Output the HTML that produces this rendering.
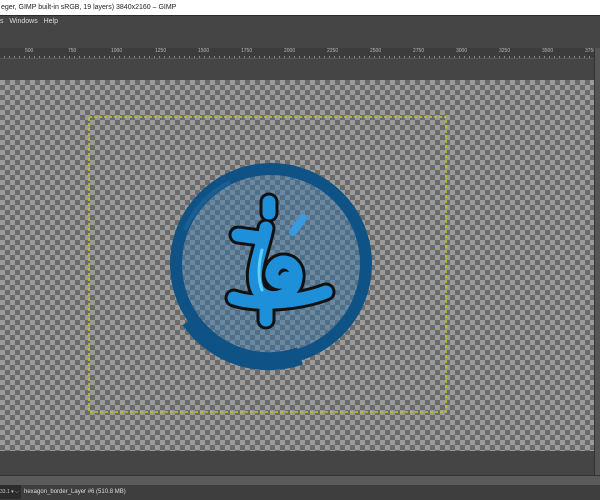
<!DOCTYPE html>
<html><head><style>
body{margin:0;width:600px;height:500px;overflow:hidden;background:#454545;font-family:"Liberation Sans",sans-serif;position:relative}
.a{position:absolute}
.chk{background-color:#9a9a9a;background-image:linear-gradient(45deg,#6a6a6a 25%,transparent 25%,transparent 75%,#6a6a6a 75%),linear-gradient(45deg,#6a6a6a 25%,transparent 25%,transparent 75%,#6a6a6a 75%);background-size:10px 10px;background-position:0 0,5px 5px}
</style></head><body>
<div class="a" style="left:0;top:0;width:600px;height:15px;background:#fff;font-size:7px;color:#222;line-height:15px;padding-left:1px">eger, GIMP built-in sRGB, 19 layers) 3840x2160 – GIMP</div>
<div class="a" style="left:0;top:15px;width:600px;height:1px;background:#2a2a2a"></div>
<div class="a" style="left:0;top:16px;font-size:7px;color:#ddd;line-height:12px">s &nbsp; Windows &nbsp; Help</div>
<div class="a" style="left:0;top:48px;width:594px;height:10px;background:#3c3c3c;font-size:5px;color:#bbb;line-height:6px;border-bottom:1px solid #555;
background-image:repeating-linear-gradient(90deg,transparent 0 4px,#888 4px 5px);background-size:100% 2px;background-repeat:no-repeat;background-position:0 8px">
<span class="a" style="left:25px">500</span><span class="a" style="left:68px">750</span><span class="a" style="left:111px">1000</span><span class="a" style="left:155px">1250</span><span class="a" style="left:198px">1500</span><span class="a" style="left:241px">1750</span><span class="a" style="left:284px">2000</span><span class="a" style="left:327px">2250</span><span class="a" style="left:370px">2500</span><span class="a" style="left:413px">2750</span><span class="a" style="left:456px">3000</span><span class="a" style="left:499px">3250</span><span class="a" style="left:542px">3500</span><span class="a" style="left:585px">3750</span></div>
<div class="a chk" style="left:0;top:80px;width:594px;height:371px"></div>
<div class="a" style="left:594px;top:48px;width:6px;height:430px;background:#555;border-left:1px solid #333"></div>
<div class="a" style="left:0;top:475px;width:600px;height:9px;background:#5a5a5a;border-top:1px solid #333"></div>
<div class="a" style="left:0;top:485px;width:600px;height:15px;background:#3e3e3e"></div>
<div class="a" style="left:0;top:485px;width:21px;height:14px;background:#2c2c2c;font-size:5px;color:#ccc;line-height:14px">33.1 ▾ ⌵</div>
<div class="a" style="left:24px;top:485px;font-size:6px;color:#ddd;line-height:15px">hexagon_border_Layer #6 (510.8 MB)</div>
<svg class="a" style="left:0;top:0" width="600" height="500">
<rect x="89" y="117" width="357" height="295" fill="none" stroke="#c0c820" stroke-width="1.5" stroke-dasharray="3,2"/>
<circle cx="271" cy="264" r="90" fill="rgba(50,115,170,0.45)"/>
<circle cx="271" cy="264" r="95" fill="none" stroke="#0e5286" stroke-width="12"/>
<path d="M190 320 A96 96 0 0 0 300 356" fill="none" stroke="#0e5286" stroke-width="18"/>
<path d="M185 230 A92 92 0 0 1 230 182" fill="none" stroke="#1b5f92" stroke-width="4"/>
<path d="M293 232 L303 218" stroke="#3a9ae0" stroke-width="8" stroke-linecap="round"/>
<g fill="none" stroke-linecap="round" stroke-linejoin="round">
<g stroke="#111" stroke-width="19">
<path d="M238 235 L260 238 M266 228 C262 250 250 272 258 290 C268 304 294 298 296 278 C298 260 276 256 272 272 C270 282 284 286 286 278"/>
<path d="M234 298 C258 306 300 302 326 292 M266 300 L266 320"/>
<path d="M269 202 L269 213"/></g>
<g stroke="#1e90da" stroke-width="13">
<path d="M238 235 L260 238 M266 228 C262 250 250 272 258 290 C268 304 294 298 296 278 C298 260 276 256 272 272 C270 282 284 286 286 278"/>
<path d="M234 298 C258 306 300 302 326 292 M266 300 L266 320"/>
<path d="M269 202 L269 213"/></g>
<path d="M262 250 C258 265 258 280 262 290" stroke="#5cd0ff" stroke-width="3"/>
</g>
</svg>
</body></html>
